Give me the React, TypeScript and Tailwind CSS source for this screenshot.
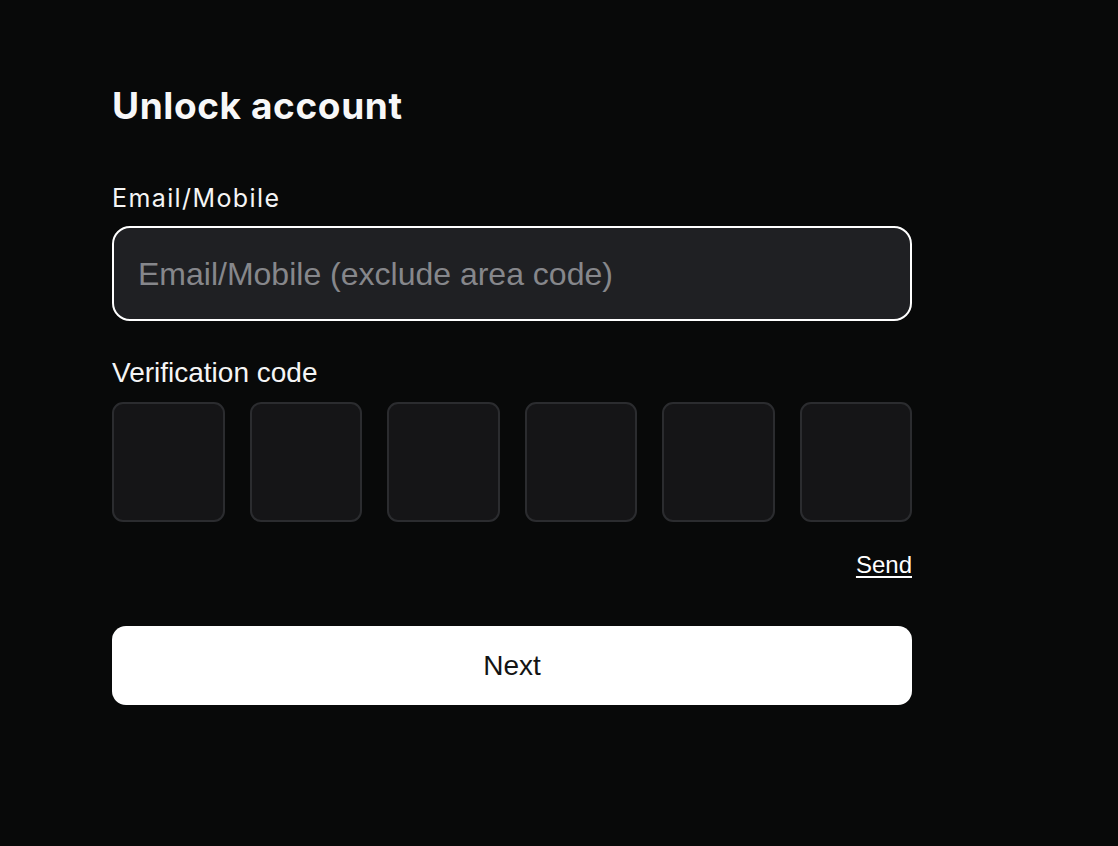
import React from 'react';

// Unlock account form — dark theme, six-digit code boxes.

const sans = 'font-["Liberation_Sans",Arial,sans-serif]';
const inter = 'font-["Inter",sans-serif]';

export default function App() {
  return (
    <div className="min-h-[846px] w-full bg-[#080909] text-white">
      <div className="w-[800px] ml-[112px] pt-[84px]">
        <h1 className={`${inter} text-[37px] font-bold leading-[44px] tracking-[0.6px] text-[#f7f7f8]`}>
          Unlock account
        </h1>

        {/* Email / Mobile */}
        <label className={`${inter} mt-[54px] block text-[25px] leading-[32px] tracking-[1.4px] text-[#f5f5f5]`}>
          Email/Mobile
        </label>
        <div className="mt-[12px] h-[95px] rounded-[18px] border-2 border-white bg-[#1f2023] flex items-center px-[24px]">
          <input
            className={`${sans} w-full bg-transparent outline-none text-[32px] text-white placeholder:text-[#86878b]`}
            placeholder="Email/Mobile (exclude area code)"
          />
        </div>

        {/* Verification code */}
        <label className={`${sans} mt-[36px] block text-[28px] leading-[32px] text-[#f5f5f5]`}>Verification code</label>
        <div className="mt-[13px] flex gap-[25px]">
          {[0, 1, 2, 3, 4, 5].map((i) => (
            <div
              key={i}
              className="h-[120px] flex-1 rounded-[11px] border-2 border-[#2b2c2f] bg-[#151517]"
            />
          ))}
        </div>

        <div className="mt-[30px] flex justify-end">
          <span className={`${sans} text-[24px] leading-[26px] underline underline-offset-[3px] text-white`}>Send</span>
        </div>

        <button
          className={`${sans} mt-[48px] h-[79px] w-full rounded-[14px] bg-white text-[28px] text-[#141414]`}
        >
          Next
        </button>
      </div>
    </div>
  );
}
